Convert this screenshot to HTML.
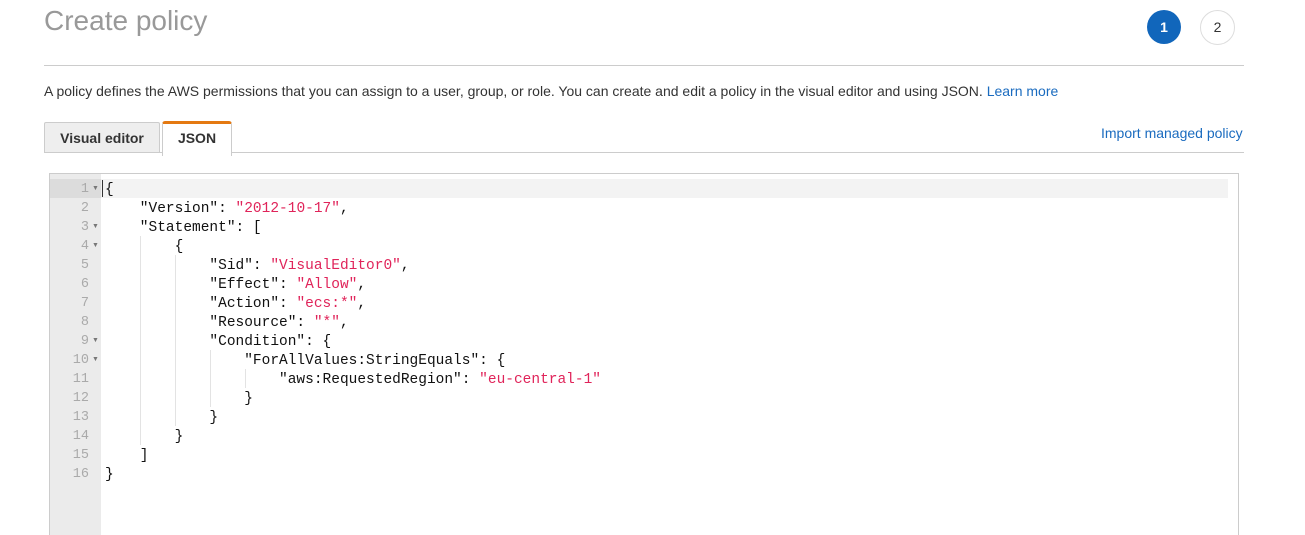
<!DOCTYPE html>
<html><head><meta charset="utf-8"><style>
html,body{margin:0;width:1305px;height:535px;overflow:hidden;background:#fff}
body{font-family:"Liberation Sans",Arial,sans-serif;position:relative}
.a{position:absolute}
h1{position:absolute;left:44px;top:5px;margin:0;font-weight:normal;font-size:28px;color:#999}
.c{position:absolute;top:10px;width:34px;height:34px;border-radius:50%;text-align:center;line-height:34px;font-size:14px}
.code{font-family:"Liberation Mono","DejaVu Sans Mono",monospace;font-size:14.5px;color:#111;white-space:pre}
.ln{position:absolute;left:49px;width:40px;text-align:right;color:#aaa;font-family:"Liberation Mono",monospace;font-size:13.5px;line-height:19px}
.s{color:#e0245a}
.g{position:absolute;width:1px;background:#e3e3e3}
.ar{position:absolute;left:92px;font-size:7px;color:#777}
</style></head><body>
<h1>Create policy</h1>
<div class="c" style="left:1147px;background:#1166bb;color:#fff;font-weight:bold">1</div>
<div class="c" style="left:1200px;border:1px solid #ddd;width:33px;height:33px;line-height:33px;color:#333">2</div>
<div class="a" style="left:44px;top:65px;width:1200px;height:1px;background:#ccc"></div>
<div class="a" style="left:44px;top:83px;font-size:14px;color:#333">A policy defines the AWS permissions that you can assign to a user, group, or role. You can create and edit a policy in the visual editor and using JSON. <span style="color:#1a6bbf">Learn more</span></div>
<div class="a" style="left:44px;top:122px;width:114px;height:30px;background:#eee;border:1px solid #ccc;border-bottom:none;border-radius:2px 2px 0 0;font-size:14px;font-weight:bold;color:#333;text-align:center;line-height:30px">Visual editor</div>
<div class="a" style="left:162px;top:121px;width:68px;height:32px;background:#fff;border:1px solid #ccc;border-top:3px solid #e47911;border-bottom:none;border-radius:3px 3px 0 0;font-size:14px;font-weight:bold;color:#333;text-align:center;line-height:28px;z-index:2">JSON</div>
<div class="a" style="left:44px;top:152px;width:1200px;height:1px;background:#ccc"></div>
<div class="a" style="left:1101px;top:125px;font-size:14px;color:#1a6bbf">Import managed policy</div>
<div class="a" style="left:49px;top:173px;width:1188px;height:362px;border:1px solid #ccc;border-bottom:none"></div>
<div class="a" style="left:50px;top:174px;width:51px;height:361px;background:#ebebeb"></div>
<div class="a" style="left:50px;top:179px;width:51px;height:19px;background:#dcdcdc"></div>
<div class="a" style="left:101px;top:179px;width:1127px;height:19px;background:#f3f3f3"></div>
<div class="a" style="left:102px;top:180px;width:1px;height:17px;background:#333"></div>
<div class="g" style="left:140px;top:236px;height:209px"></div>
<div class="g" style="left:175px;top:255px;height:171px"></div>
<div class="g" style="left:210px;top:350px;height:57px"></div>
<div class="g" style="left:245px;top:369px;height:19px"></div>
<div class="ln" style="top:180px">1<br>2<br>3<br>4<br>5<br>6<br>7<br>8<br>9<br>10<br>11<br>12<br>13<br>14<br>15<br>16</div>
<div class="ar" style="top:185px">▼</div><div class="ar" style="top:223px">▼</div><div class="ar" style="top:242px">▼</div><div class="ar" style="top:337px">▼</div><div class="ar" style="top:356px">▼</div>
<div class="a code" style="left:105px;top:181px;line-height:19px">{
    "Version": <span class="s">"2012-10-17"</span>,
    "Statement": [
        {
            "Sid": <span class="s">"VisualEditor0"</span>,
            "Effect": <span class="s">"Allow"</span>,
            "Action": <span class="s">"ecs:*"</span>,
            "Resource": <span class="s">"*"</span>,
            "Condition": {
                "ForAllValues:StringEquals": {
                    "aws:RequestedRegion": <span class="s">"eu-central-1"</span>
                }
            }
        }
    ]
}</div>
</body></html>
